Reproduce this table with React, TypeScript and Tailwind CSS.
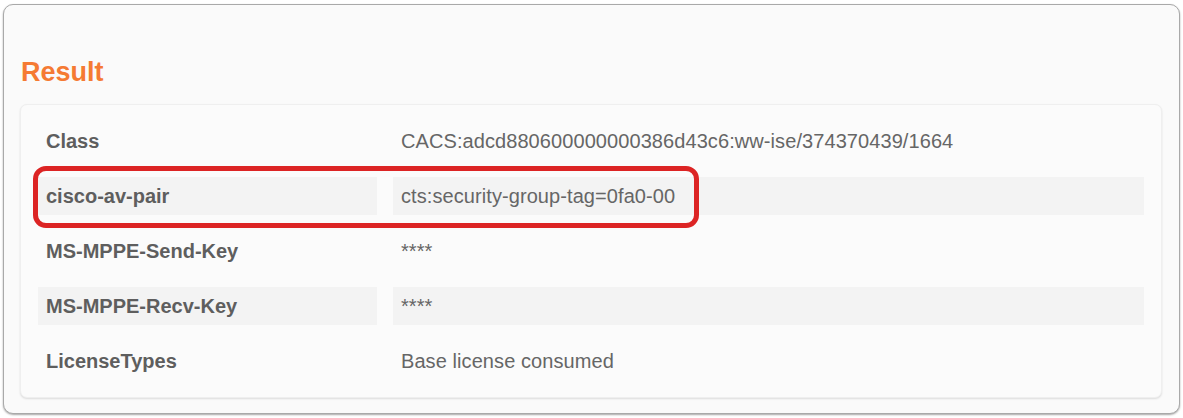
const ROWS: { label: string; value: string }[] = [
  { label: 'Class', value: 'CACS:adcd880600000000386d43c6:ww-ise/374370439/1664' },
  { label: 'cisco-av-pair', value: 'cts:security-group-tag=0fa0-00' },
  { label: 'MS-MPPE-Send-Key', value: '****' },
  { label: 'MS-MPPE-Recv-Key', value: '****' },
  { label: 'LicenseTypes', value: 'Base license consumed' },
];

export default function App() {
  return (
    <div
      className="w-[1183px] h-[418px] bg-white pt-[4px] pl-[3px]"
      style={{ fontFamily: '"Liberation Sans", Arial, Helvetica, sans-serif' }}
    >
      <div className="w-[1177px] h-[410px] flex flex-col bg-[#fafafa] border border-[#a9a9a9] rounded-[10px] shadow-[0_1px_2px_rgba(0,0,0,0.35)] pt-[52px] px-[16px]">
        <h2 className="pl-[1px] text-[27px] leading-[30px] font-bold text-[#f57a33]">Result</h2>

        <div className="mt-[17px] w-[1142px] flex flex-col gap-[17px] p-[17px] bg-[#fbfbfb] border border-[#efefef] rounded-[7px] shadow-[0_1px_2px_rgba(0,0,0,0.12)]">
          {ROWS.map((row, i) => {
            const striped = i % 2 === 1;
            return (
              <div key={row.label} className="relative flex gap-[16px] h-[38px]">
                <div
                  className={`w-[339px] flex items-center pl-[8px] text-[20px] font-bold text-[#5e5e5e] ${striped ? 'bg-[#f3f3f3]' : ''}`}
                >
                  {row.label}
                </div>
                <div
                  className={`flex-1 flex items-center pl-[8px] text-[20px] tracking-[0.08px] text-[#666666] ${striped ? 'bg-[#f3f3f3]' : ''}`}
                >
                  {row.value}
                </div>
                {i === 1 && (
                  <div className="absolute left-[-5px] top-[-11px] w-[666px] h-[62px] border-[5px] border-[#dc2424] rounded-[13px] pointer-events-none" />
                )}
              </div>
            );
          })}
        </div>
      </div>
    </div>
  );
}
